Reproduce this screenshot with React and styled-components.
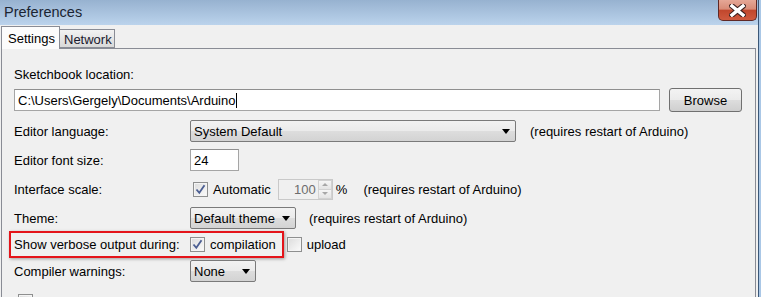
import React from 'react';
import styled, { createGlobalStyle } from 'styled-components';

const GlobalStyle = createGlobalStyle`
  html, body {
    margin: 0;
    padding: 0;
    background: #aac7e6;
    overflow: hidden;
  }
  body {
    font-family: 'Liberation Sans', Arial, sans-serif;
    font-size: 13px;
    color: #000;
  }
`;

const Window = styled.div`
  width: 758px;
  height: 297px;
  border-right: 1px solid #3c5878;
  background: #f0f0f0;
  display: flex;
  flex-direction: column;
  overflow: hidden;
`;

const TitleBar = styled.div`
  height: 25px;
  flex: none;
  display: flex;
  align-items: center;
  justify-content: space-between;
  padding-left: 4px;
  background: linear-gradient(#97b2d0, #bbd3ec);
`;

const Title = styled.span`
  font-size: 14.5px;
  color: #1b2533;
  margin-top: -1px;
`;

const CloseButton = styled.div`
  align-self: flex-start;
  width: 37px;
  height: 20px;
  margin-right: 1px;
  border: 1px solid #5f2825;
  border-top: none;
  border-radius: 0 0 5px 5px;
  background: linear-gradient(#e5a796 0%, #d88b77 45%, #c1472d 52%, #cf5a3f 100%);
  display: flex;
  align-items: center;
  justify-content: center;
`;

const Body = styled.div`
  flex: 1;
  padding-left: 1px;
  padding-right: 2px;
  display: flex;
  flex-direction: column;
`;

const TabBar = styled.div`
  height: 23px;
  display: flex;
  align-items: flex-end;
`;

const Tab = styled.div`
  height: ${p => (p.$active ? 23 : 19)}px;
  width: ${p => p.$w}px;
  box-sizing: border-box;
  border: 1px solid #898c95;
  border-bottom: ${p => (p.$active ? 'none' : '1px solid #898c95')};
  margin-bottom: ${p => (p.$active ? -1 : 0)}px;
  margin-left: ${p => (p.$active ? 0 : -1)}px;
  position: relative;
  z-index: ${p => (p.$active ? 2 : 1)};
  background: ${p =>
    p.$active ? '#fcfcfc' : 'linear-gradient(#f2f2f2, #d9d9d9)'};
  display: flex;
  align-items: center;
  padding-left: ${p => (p.$active ? 6 : 4)}px;
  padding-top: ${p => (p.$active ? 0 : 1)}px;
  color: ${p => (p.$active ? '#000' : '#1a1a2e')};
  white-space: nowrap;
`;

const Panel = styled.div`
  flex: 1;
  border: 1px solid #898c95;
  border-bottom: none;
  background: #f0f0f0;
  padding: 14px 0 0 12px;
  display: flex;
  flex-direction: column;
`;

const Row = styled.div`
  height: ${p => p.$h || 22}px;
  margin-top: ${p => p.$gap || 0}px;
  display: flex;
  align-items: center;
  position: relative;
`;

const Label = styled.span`
  width: 176px;
  flex: none;
  white-space: nowrap;
`;

const TextField = styled.div`
  width: ${p => p.$w}px;
  height: 22px;
  box-sizing: border-box;
  background: #fff;
  border: 1px solid #a5a5a5;
  border-top-color: #8f8f8f;
  display: flex;
  align-items: center;
  padding-left: 3px;
  white-space: nowrap;
`;

const Caret = styled.span`
  display: inline-block;
  width: 1px;
  height: 15px;
  background: #000;
  margin-left: 1px;
`;

const Button = styled.div`
  width: 73px;
  height: 24px;
  box-sizing: border-box;
  margin-left: 9px;
  border: 1px solid #707070;
  border-radius: 3px;
  background: linear-gradient(#f3f3f3 0%, #ebebeb 48%, #dddddd 52%, #cfcfcf 100%);
  display: flex;
  align-items: center;
  justify-content: center;
`;

const Select = styled.div`
  width: ${p => p.$w}px;
  height: 22px;
  box-sizing: border-box;
  border: 1px solid #7a7a7a;
  border-radius: 2px;
  background: linear-gradient(#f2f2f2 0%, #ebebeb 48%, #dddddd 52%, #d3d3d3 100%);
  display: flex;
  align-items: center;
  justify-content: space-between;
  padding: 0 5px 0 3px;
  flex: none;
  white-space: nowrap;
`;

const Arrow = styled.span`
  width: 0;
  height: 0;
  border-left: 4px solid transparent;
  border-right: 4px solid transparent;
  border-top: 5px solid #000;
`;

const Note = styled.span`
  margin-left: ${p => p.$ml}px;
  white-space: nowrap;
`;

const Box = styled.span`
  width: 13px;
  height: 13px;
  flex: none;
  border: 1px solid #8e8f8f;
  background: linear-gradient(135deg, #dcdcdc, #fbfbfb);
  box-shadow: inset 0 0 0 1px #f4f4f4;
  display: flex;
  align-items: center;
  justify-content: center;
  margin-left: ${p => p.$ml || 0}px;
`;

const CheckText = styled.span`
  margin-left: 5px;
  white-space: nowrap;
`;

const Spinner = styled.div`
  width: 55px;
  height: 21px;
  box-sizing: border-box;
  margin-left: 7px;
  border: 1px solid #c9c9c9;
  background: #f0f0f0;
  display: flex;
  align-items: stretch;
  flex: none;
`;

const SpinValue = styled.span`
  flex: 1;
  color: #6d6d6d;
  text-align: right;
  padding-right: 2px;
  line-height: 19px;
`;

const SpinButtons = styled.div`
  width: 14px;
  display: flex;
  flex-direction: column;
`;

const SpinButton = styled.div`
  flex: 1;
  border: 1px solid #d2d2d2;
  border-top-width: ${p => (p.$down ? 0 : 1)}px;
  background: linear-gradient(#f6f6f6, #e4e4e4);
  display: flex;
  align-items: center;
  justify-content: center;
  &::after {
    content: '';
    border-left: 3px solid transparent;
    border-right: 3px solid transparent;
    ${p =>
      p.$down ? 'border-top: 3px solid #a7a7a7;' : 'border-bottom: 3px solid #a7a7a7;'}
  }
`;

const Highlight = styled.div`
  position: absolute;
  left: -5px;
  top: -2px;
  width: 271px;
  height: 23px;
  border: 2px solid #e4141a;
  box-shadow: 1px 1px 3px rgba(0, 0, 0, 0.35);
  pointer-events: none;
`;

const Check = () => (
  <svg width="11" height="11" viewBox="0 0 11 11">
    <path d="M1.5 5.5 L4.3 8.8 L9.5 1.2" fill="none" stroke="#4b5e92" strokeWidth="1.8" />
  </svg>
);

const Checkbox = ({ checked, ml }) => <Box $ml={ml}>{checked && <Check />}</Box>;

const CloseGlyph = () => (
  <svg width="17" height="13" viewBox="0 0 17 13">
    <path d="M3 2 L14 11 M14 2 L3 11" stroke="#3a1d1b" strokeWidth="5.5" strokeLinecap="square" />
    <path d="M3 2 L14 11 M14 2 L3 11" stroke="#ffffff" strokeWidth="3.5" strokeLinecap="square" />
  </svg>
);

export default function App() {
  return (
    <>
      <GlobalStyle />
      <Window>
        <TitleBar>
          <Title>Preferences</Title>
          <CloseButton>
            <CloseGlyph />
          </CloseButton>
        </TitleBar>
        <Body>
          <TabBar>
            <Tab $active $w={59}>Settings</Tab>
            <Tab $w={56}>Network</Tab>
          </TabBar>
          <Panel>
            <Row>
              <Label>Sketchbook location:</Label>
            </Row>
            <Row $h={24} $gap={3}>
              <TextField $w={646}>
                C:\Users\Gergely\Documents\Arduino
                <Caret />
              </TextField>
              <Button>Browse</Button>
            </Row>
            <Row $gap={8}>
              <Label>Editor language:</Label>
              <Select $w={326}>
                System Default
                <Arrow />
              </Select>
              <Note $ml={14}>(requires restart of Arduino)</Note>
            </Row>
            <Row $gap={7}>
              <Label>Editor font size:</Label>
              <TextField $w={49}>24</TextField>
            </Row>
            <Row $gap={7}>
              <Label>Interface scale:</Label>
              <Checkbox checked ml={3} />
              <CheckText>Automatic</CheckText>
              <Spinner>
                <SpinValue>100</SpinValue>
                <SpinButtons>
                  <SpinButton />
                  <SpinButton $down />
                </SpinButtons>
              </Spinner>
              <Note $ml={3}>%</Note>
              <Note $ml={16}>(requires restart of Arduino)</Note>
            </Row>
            <Row $gap={7}>
              <Label>Theme:</Label>
              <Select $w={106}>
                Default theme
                <Arrow />
              </Select>
              <Note $ml={13}>(requires restart of Arduino)</Note>
            </Row>
            <Row $gap={4}>
              <Highlight />
              <Label>Show verbose output during:</Label>
              <Checkbox checked />
              <CheckText>compilation</CheckText>
              <Checkbox ml={11} />
              <CheckText>upload</CheckText>
            </Row>
            <Row $gap={5}>
              <Label>Compiler warnings:</Label>
              <Select $w={66}>
                None
                <Arrow />
              </Select>
            </Row>
            <Row $gap={8}>
              <Checkbox ml={4} />
              <CheckText>Display line numbers</CheckText>
            </Row>
          </Panel>
        </Body>
      </Window>
    </>
  );
}
